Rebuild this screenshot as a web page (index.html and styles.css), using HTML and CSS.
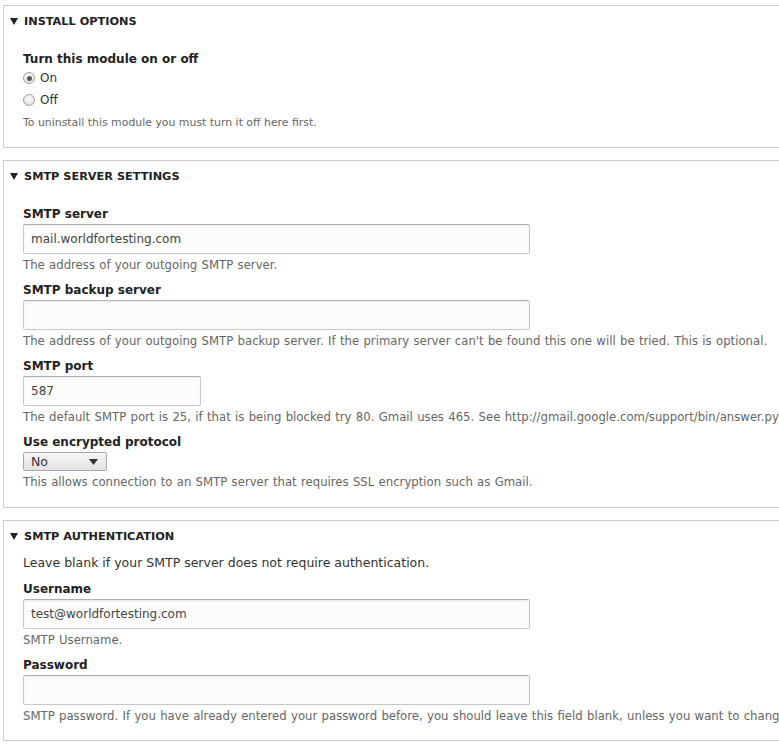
FILE: index.html
```html
<!DOCTYPE html>
<html lang="en">
<head>
<meta charset="utf-8">
<title>SMTP settings</title>
<link rel="stylesheet" href="styles.css">
</head>
<body>
<form class="page">
  <section class="panel">
    <div class="summary"><span class="tri"></span>INSTALL OPTIONS</div>
    <div class="panel-body body-install">
      <div class="item">
        <div class="label">Turn this module on or off</div>
        <label class="radio-row first"><span class="radio checked"></span><span>On</span></label>
        <label class="radio-row"><span class="radio"></span><span>Off</span></label>
        <div class="desc small">To uninstall this module you must turn it off here first.</div>
      </div>
    </div>
  </section>

  <section class="panel">
    <div class="summary"><span class="tri"></span>SMTP SERVER SETTINGS</div>
    <div class="panel-body body-server">
      <div class="item">
        <div class="label">SMTP server</div>
        <div class="input wide">mail.worldfortesting.com</div>
        <div class="desc">The address of your outgoing SMTP server.</div>
      </div>
      <div class="item">
        <div class="label">SMTP backup server</div>
        <div class="input wide"></div>
        <div class="desc">The address of your outgoing SMTP backup server. If the primary server can't be found this one will be tried. This is optional.</div>
      </div>
      <div class="item">
        <div class="label">SMTP port</div>
        <div class="input narrow">587</div>
        <div class="desc">The default SMTP port is 25, if that is being blocked try 80. Gmail uses 465. See http://gmail.google.com/support/bin/answer.py?answer=13287 for more information.</div>
      </div>
      <div class="item">
        <div class="label">Use encrypted protocol</div>
        <div class="select"><span>No</span><svg class="caret" width="9" height="6" viewBox="0 0 9 6"><path d="M0 0H9L4.5 6Z" fill="#333"/></svg></div>
        <div class="desc">This allows connection to an SMTP server that requires SSL encryption such as Gmail.</div>
      </div>
    </div>
  </section>

  <section class="panel">
    <div class="summary"><span class="tri"></span>SMTP AUTHENTICATION</div>
    <div class="panel-body body-auth">
      <div class="lead">Leave blank if your SMTP server does not require authentication.</div>
      <div class="item">
        <div class="label">Username</div>
        <div class="input wide">test@worldfortesting.com</div>
        <div class="desc">SMTP Username.</div>
      </div>
      <div class="item">
        <div class="label">Password</div>
        <div class="input wide"></div>
        <div class="desc">SMTP password. If you have already entered your password before, you should leave this field blank, unless you want to change the stored password.</div>
      </div>
    </div>
  </section>
</form>
</body>
</html>
```

FILE: styles.css
```css
html, body {
  margin: 0;
  padding: 0;
  background: #fff;
  overflow: hidden;
}
body {
  font-family: "DejaVu Sans", Verdana, sans-serif;
  color: #222;
  font-size: 12px;
}
.page {
  padding: 5px 0 0 3px;
  width: 840px;
}
.panel {
  border: 1px solid #ccc;
  margin-bottom: 12px;
}
.summary {
  display: flex;
  align-items: center;
  height: 30px;
  padding-left: 6px;
  font-weight: bold;
  font-size: 11.3px;
  color: #222;
  white-space: nowrap;
}
.tri {
  width: 0;
  height: 0;
  border-left: 4px solid transparent;
  border-right: 4px solid transparent;
  border-top: 7px solid #222;
  margin-right: 6px;
}
.panel-body {
  padding: 14px 0 16px 19px;
}
.body-install {
  padding-top: 14px;
}
.body-server {
  padding-top: 14px;
  padding-bottom: 17px;
}
.body-auth {
  padding-top: 3px;
}
.item + .item, .lead + .item {
  margin-top: 8px;
}
.label {
  font-weight: bold;
  font-size: 12px;
  line-height: 18px;
  color: #222;
  white-space: nowrap;
}
.lead {
  font-size: 12.5px;
  line-height: 18px;
  color: #333;
  white-space: nowrap;
}
.input {
  box-sizing: border-box;
  height: 30px;
  margin-top: 1px;
  border: 1px solid #c8c8c8;
  border-top-color: #b0b0b0;
  border-radius: 2px;
  background: #fcfcfa;
  box-shadow: inset 0 1px 2px rgba(0,0,0,0.08);
  padding: 0 7px;
  display: flex;
  align-items: center;
  font-size: 12px;
  color: #444;
  white-space: nowrap;
}
.input.wide { width: 507px; }
.input.narrow { width: 178px; }
.select {
  box-sizing: border-box;
  width: 84px;
  height: 19px;
  margin-top: 1px;
  border: 1px solid #a8a8a8;
  border-radius: 2px;
  background: linear-gradient(#f6f6f6, #e2e2e2);
  display: flex;
  align-items: center;
  justify-content: space-between;
  padding: 0 8px 0 7px;
  font-size: 12.5px;
  color: #333;
}
.desc {
  margin-top: 3px;
  font-size: 11.7px;
  word-spacing: 0.6px;
  line-height: 16px;
  color: #666;
  white-space: nowrap;
}
.desc.small {
  font-size: 10.9px;
  word-spacing: 0;
  margin-top: 4px;
}
.radio-row {
  display: flex;
  align-items: center;
  height: 22px;
  font-size: 12px;
  color: #333;
}
.radio-row.first {
  margin-top: -1px;
}
.radio {
  box-sizing: border-box;
  width: 12px;
  height: 12px;
  border-radius: 50%;
  border: 1px solid #a0a0a0;
  background: radial-gradient(circle at 50% 35%, #fafafa, #dcdcdc);
  margin-right: 5px;
  display: flex;
  align-items: center;
  justify-content: center;
}
.radio.checked::after {
  content: "";
  width: 5px;
  height: 5px;
  border-radius: 50%;
  background: #555;
}
```
